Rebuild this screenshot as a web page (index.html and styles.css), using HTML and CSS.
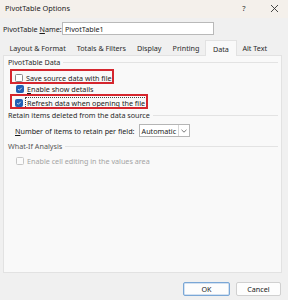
FILE: index.html
```html
<!DOCTYPE html>
<html>
<head>
<meta charset="utf-8">
<link rel="stylesheet" href="styles.css">
</head>
<body>
<div class="dialog">
  <div class="titlebar">
    <span class="title">PivotTable Options</span>
    <span class="tb-btns"><span class="help">?</span><span class="close">
      <svg width="9" height="9" viewBox="0 0 9 9"><path d="M1 1L8 8M8 1L1 8" stroke="#333" stroke-width="0.9" fill="none"/></svg>
    </span></span>
  </div>
  <div class="namerow">
    <span class="lbl">PivotTable <u>N</u>ame:</span>
    <span class="input">PivotTable1</span>
  </div>
  <div class="tabs">
    <span class="tab">Layout &amp; Format</span>
    <span class="tab">Totals &amp; Filters</span>
    <span class="tab">Display</span>
    <span class="tab">Printing</span>
    <span class="tab sel">Data</span>
    <span class="tab">Alt Text</span>
  </div>
  <div class="panel">
    <div class="grp-h">PivotTable Data</div>
    <div class="row r-save hl"><span class="cb"></span><span><u>S</u>ave source data with file</span></div>
    <div class="row r-enable"><span class="cb on"><svg width="8" height="8" viewBox="0 0 8 8"><path d="M1.6 4.1L3.2 5.7L6.4 2.3" stroke="#fff" stroke-width="1" fill="none"/></svg></span><span><u>E</u>nable show details</span></div>
    <div class="row r-refresh hl"><span class="cb on"><svg width="8" height="8" viewBox="0 0 8 8"><path d="M1.6 4.1L3.2 5.7L6.4 2.3" stroke="#fff" stroke-width="1" fill="none"/></svg></span><span class="focus"><u>R</u>efresh data when opening the file</span></div>
    <div class="grp-h g-retain">Retain items deleted from the data source</div>
    <div class="row r-number"><span><u>N</u>umber of items to retain per field:</span>
      <span class="select"><span class="sel-val">Automatic</span><span class="sel-arrow"><svg width="6" height="4" viewBox="0 0 6 4"><path d="M0.5 0.8L3 3.2L5.5 0.8" stroke="#555" stroke-width="0.8" fill="none"/></svg></span></span>
    </div>
    <div class="grp-h g-whatif">What-If Analysis</div>
    <div class="row r-cell disabled"><span class="cb dis"></span><span>Enable cell editing in the values area</span></div>
  </div>
  <div class="footer">
    <span class="btn ok">OK</span>
    <span class="btn">Cancel</span>
  </div>
</div>
</body>
</html>
```
FILE: styles.css
```css
* { box-sizing: border-box; }
html, body { margin: 0; padding: 0; }
body {
  width: 288px;
  height: 300px;
  background: #f0f0f0;
  font-family: "Noto Sans", "Open Sans", sans-serif;
  font-size: 7.2px;
  color: #1b1b1b;
  overflow: hidden;
}
u { text-decoration: underline; text-underline-offset: 1px; }
.dialog { width: 288px; height: 300px; display: flex; flex-direction: column; }

.titlebar {
  height: 18px;
  background: #f4f0eb;
  display: flex;
  align-items: center;
  justify-content: space-between;
  padding: 0 0 2px 5px;
}
.title { font-size: 7.4px; color: #222; }
.tb-btns { display: flex; align-items: center; }
.help { width: 28px; text-align: center; font-size: 7.6px; color: #333; margin-right: 2px; }
.close { width: 28px; display: flex; justify-content: center; }

.namerow {
  display: flex;
  align-items: center;
  margin-top: 4px;
  padding-left: 3px;
  height: 13px;
}
.lbl { width: 59px; }
.input {
  width: 152px;
  height: 13px;
  background: #fff;
  border: 1px solid #b9b9b9;
  padding-left: 2px;
  display: flex;
  align-items: center;
}

.tabs {
  display: flex;
  margin-top: 5px;
  padding-left: 4px;
  height: 15px;
  position: relative;
  z-index: 1;
}
.tab {
  padding: 0 5.5px;
  display: flex;
  align-items: center;
  color: #2a2a2a;
}
.tab.sel {
  padding: 0 7px;
  background: #f9f9f9;
  border: 1px solid #e2e2e2;
  border-bottom: none;
  height: 16px;
}

.panel {
  margin: 0 6px 0 3px;
  height: 218px;
  background: #f9f9f9;
  border: 1px solid #e2e2e2;
  padding: 0 3px 0 4px;
}
.grp-h {
  display: flex;
  align-items: center;
  height: 12px;
  gap: 3px;
  color: #2a2a2a;
}
.grp-h::after {
  content: "";
  flex: 1;
  height: 1px;
  background: #e3e3e3;
}
.g-retain { margin-top: 1px; }
.g-whatif { margin-top: 3px; color: #555; }

.row {
  display: flex;
  align-items: center;
  gap: 3px;
  height: 11px;
  padding-left: 7px;
  width: max-content;
  position: relative;
}
.r-save { margin-top: 4px; }
.r-refresh { margin-top: 3px; }
.r-number { margin-top: 3px; height: 13px; gap: 0; }
.r-cell { margin-top: 3px; padding-left: 8px; }
.r-enable { padding-left: 8px; }
.hl::after {
  content: "";
  position: absolute;
  top: -3px;
  bottom: -1px;
  left: 2px;
  right: -2px;
  border: 2px solid #d5262e;
}
.focus { outline: 1px dotted #444; outline-offset: 0; padding: 0 1px; }

.cb {
  width: 8px;
  height: 8px;
  border: 1px solid #8a8a8a;
  border-radius: 1.5px;
  background: #fff;
  display: flex;
  align-items: center;
  justify-content: center;
}
.cb.on { background: #1f5fb5; border-color: #1f5fb5; }
.cb.on svg { display: block; }
.cb.dis { border-color: #c6c6c6; background: #fbfbfb; }
.disabled { color: #a4a4a4; }

.select {
  margin-left: 4px;
  width: 51px;
  height: 13px;
  border: 1px solid #b5b5b5;
  background: #fff;
  display: flex;
  align-items: center;
}
.sel-val { flex: 1; padding-left: 2px; }
.sel-arrow {
  width: 11px;
  height: 11px;
  border-left: 1px solid #d6d6d6;
  display: flex;
  align-items: center;
  justify-content: center;
}

.footer {
  display: flex;
  justify-content: flex-end;
  gap: 6px;
  padding-right: 7px;
  margin-top: 9px;
}
.btn {
  width: 45px;
  height: 14px;
  background: #fdfdfd;
  border: 1px solid #d0d0d0;
  border-radius: 2px;
  display: flex;
  align-items: center;
  justify-content: center;
}
.btn.ok { width: 47px; border-color: #7aa7d6; box-shadow: inset 0 0 0 0.5px #a9c6e6; }
```
